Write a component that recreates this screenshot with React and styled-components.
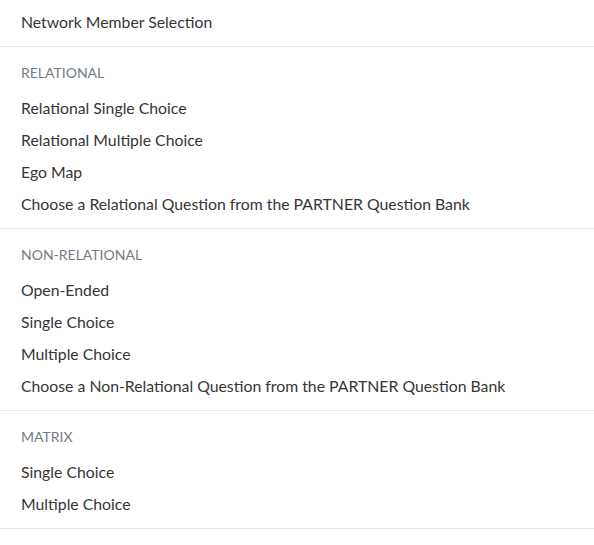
import React from "react";
import styled, { createGlobalStyle } from "styled-components";

const Global = createGlobalStyle`
  html, body { margin: 0; padding: 0; background: #ffffff; }
  body { font-family: Lato, "Open Sans", sans-serif; }
`;

const Menu = styled.div`
  display: flex;
  flex-direction: column;
  width: 594px;
`;

const Section = styled.div`
  display: flex;
  flex-direction: column;
  padding: ${(p) => (p.$top ? "6px 0 8px" : "8px 0")};
  border-bottom: 1px solid #e6e8ec;
`;

const Label = styled.div`
  padding: 8px 21px 9px;
  line-height: 20px;
  font-size: 14px;
  color: #747b86;
  text-transform: uppercase;
`;

const Item = styled.div`
  padding: 0 21px;
  line-height: 32px;
  height: 32px;
  font-size: 15.8px;
  color: #363636;
  cursor: pointer;
  white-space: nowrap;
`;

const sections = [
  {
    label: "Relational",
    items: [
      "Relational Single Choice",
      "Relational Multiple Choice",
      "Ego Map",
      "Choose a Relational Question from the PARTNER Question Bank",
    ],
  },
  {
    label: "Non-Relational",
    items: [
      "Open-Ended",
      "Single Choice",
      "Multiple Choice",
      "Choose a Non-Relational Question from the PARTNER Question Bank",
    ],
  },
  {
    label: "Matrix",
    items: ["Single Choice", "Multiple Choice"],
  },
];

export default function App() {
  return (
    <>
      <Global />
      <Menu>
        <Section $top>
          <Item>Network Member Selection</Item>
        </Section>
        {sections.map((s) => (
          <Section key={s.label}>
            <Label>{s.label}</Label>
            {s.items.map((it) => (
              <Item key={it}>{it}</Item>
            ))}
          </Section>
        ))}
      </Menu>
    </>
  );
}
